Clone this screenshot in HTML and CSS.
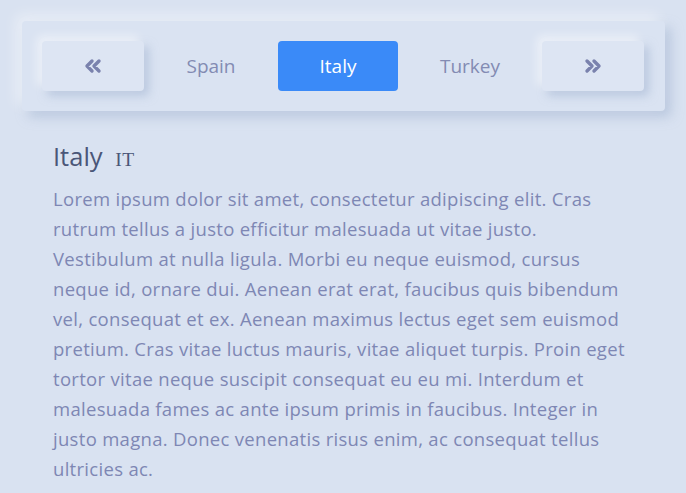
FILE: index.html
```html
<!DOCTYPE html>
<html lang="en">
<head>
<meta charset="utf-8">
<title>Tabs</title>
<link rel="stylesheet" href="styles.css">
</head>
<body>
<div class="page">
  <nav class="tabs">
    <button class="tab arrow" aria-label="Previous">
      <svg width="20" height="16" viewBox="0 0 20 16"><path d="M9 3 L4 8 L9 13 M16 3 L11 8 L16 13" fill="none" stroke="currentColor" stroke-width="3.4" stroke-linecap="round" stroke-linejoin="round"/></svg>
    </button>
    <span class="tab">Spain</span>
    <span class="tab active">Italy</span>
    <span class="tab">Turkey</span>
    <button class="tab arrow" aria-label="Next">
      <svg width="20" height="16" viewBox="0 0 20 16"><path d="M4 3 L9 8 L4 13 M11 3 L16 8 L11 13" fill="none" stroke="currentColor" stroke-width="3.4" stroke-linecap="round" stroke-linejoin="round"/></svg>
    </button>
  </nav>
  <section class="content">
    <h2 class="title">Italy <span class="code">IT</span></h2>
    <p class="text">Lorem ipsum dolor sit amet, consectetur adipiscing elit. Cras rutrum tellus a justo efficitur malesuada ut vitae justo. Vestibulum at nulla ligula. Morbi eu neque euismod, cursus neque id, ornare dui. Aenean erat erat, faucibus quis bibendum vel, consequat et ex. Aenean maximus lectus eget sem euismod pretium. Cras vitae luctus mauris, vitae aliquet turpis. Proin eget tortor vitae neque suscipit consequat eu eu mi. Interdum et malesuada fames ac ante ipsum primis in faucibus. Integer in justo magna. Donec venenatis risus enim, ac consequat tellus ultricies ac.</p>
  </section>
</div>
</body>
</html>
```
FILE: styles.css
```css
html, body {
  margin: 0;
  padding: 0;
  background: #d9e2f1;
}
body {
  font-family: "Open Sans", "Noto Sans", sans-serif;
  overflow: hidden;
}
.page {
  padding: 21px 21px 0 22px;
}
.tabs {
  display: grid;
  grid-template-columns: 102px 134px 120px 144px 102px;
  align-items: center;
  height: 50px;
  padding: 20px;
  background: #dae3f2;
  border-radius: 4px;
  box-shadow: -6px -6px 14px rgba(255,255,255,0.45), 6px 6px 12px rgba(160,178,208,0.55);
}
.tab {
  display: flex;
  align-items: center;
  justify-content: center;
  height: 50px;
  font-size: 19px;
  color: #838bb3;
  font-family: inherit;
}
.arrow {
  border: 0;
  padding: 0;
  background: #dde5f3;
  border-radius: 4px;
  color: #7a82ad;
  box-shadow: -5px -5px 10px rgba(255,255,255,0.5), 5px 5px 10px rgba(160,178,208,0.55);
}
.active {
  background: #3a8af8;
  color: #ffffff;
  border-radius: 4px;
}
.content {
  padding: 0 36px 0 31px;
}
.title {
  margin: 30px 0 0;
  font-weight: 400;
  font-size: 25.5px;
  line-height: 30px;
  color: #4a5678;
}
.code {
  font-family: "Liberation Serif", "DejaVu Serif", serif;
  font-size: 19.5px;
  font-weight: 400;
  letter-spacing: 0.5px;
  margin-left: 6px;
}
.text {
  margin: 9px 0 0;
  font-size: 18.5px;
  letter-spacing: 0.3px;
  line-height: 30px;
  color: #7e87b4;
}
```
